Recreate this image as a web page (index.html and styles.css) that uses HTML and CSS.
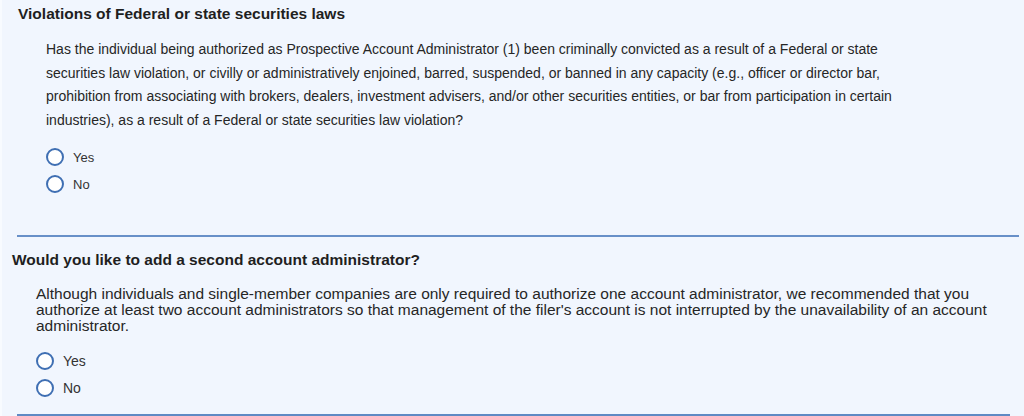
FILE: index.html
```html
<!DOCTYPE html>
<html lang="en">
<head>
    <meta charset="UTF-8">
    <meta name="viewport" content="width=device-width, initial-scale=1.0">
    <title>Account Administrator Questions</title>
    <link rel="stylesheet" href="styles.css">
</head>
<body>
    <div class="form-page">

        <!-- Question: securities law violations -->
        <section class="question question-violations">
            <h2 class="question-title">Violations of Federal or state securities laws</h2>
            <div class="question-body">
                <p class="question-text">Has the individual being authorized as Prospective Account Administrator (1) been criminally convicted as a result of a Federal or state securities law violation, or civilly or administratively enjoined, barred, suspended, or banned in any capacity (e.g., officer or director bar, prohibition from associating with brokers, dealers, investment advisers, and/or other securities entities, or bar from participation in certain industries), as a result of a Federal or state securities law violation?</p>
                <div class="radio-group">
                    <label class="radio-option"><span class="radio-circle"></span>Yes</label>
                    <label class="radio-option"><span class="radio-circle"></span>No</label>
                </div>
            </div>
        </section>

        <!-- Question: second administrator -->
        <section class="question question-second">
            <h2 class="question-title">Would you like to add a second account administrator?</h2>
            <div class="question-body">
                <p class="question-text">Although individuals and single-member companies are only required to authorize one account administrator, we recommended that you authorize at least two account administrators so that management of the filer's account is not interrupted by the unavailability of an account administrator.</p>
                <div class="radio-group">
                    <label class="radio-option"><span class="radio-circle"></span>Yes</label>
                    <label class="radio-option"><span class="radio-circle"></span>No</label>
                </div>
            </div>
        </section>
        <hr class="section-rule">
    </div>
</body>
</html>
```

FILE: styles.css
```css
/* Global */
html, body {
    margin: 0;
    padding: 0;
    background-color: #f1f6fe;
    font-family: "Liberation Sans", Arial, sans-serif;
    color: #262626;
}

.form-page {
    border-left: 2px solid #f8fbff;
    min-height: 416px;
    box-sizing: border-box;
}

/* Question blocks */
.question-title {
    margin: 0;
    font-weight: bold;
    font-size: 15.5px;
    line-height: 18px;
    color: #1f1f1f;
}

.question-text {
    margin: 0;
}

.radio-group {
    display: flex;
    flex-direction: column;
}

.radio-option {
    display: flex;
    align-items: center;
    height: 27px;
    cursor: pointer;
    color: #333;
}

.radio-circle {
    width: 14px;
    height: 14px;
    border: 2px solid #3f6fb3;
    border-radius: 50%;
    background-color: #fff;
    margin-right: 9px;
    flex-shrink: 0;
}

/* First question */
.question-violations {
    margin: 0 5px 0 15px;
    padding: 5px 0 37px 1px;
    border-bottom: 2px solid #6890c8;
}

.question-violations .question-body {
    padding: 15px 100px 0 28px;
}

.question-violations .question-text {
    font-size: 14px;
    line-height: 23.7px;
}

.question-violations .radio-group {
    margin-top: 11px;
}

.question-violations .radio-option {
    font-size: 13px;
}

/* Second question */
.question-second {
    padding: 14px 14px 0 10px;
}

.question-second .question-body {
    padding: 17px 0 0 24px;
}

.question-second .question-text {
    font-size: 15.5px;
    line-height: 16px;
}

.question-second .radio-group {
    margin-top: 14px;
}

.question-second .radio-option {
    font-size: 14px;
}

.section-rule {
    margin: 12px 14px 0 15px;
    border: 0;
    border-top: 2px solid #5f8ac4;
}
```
